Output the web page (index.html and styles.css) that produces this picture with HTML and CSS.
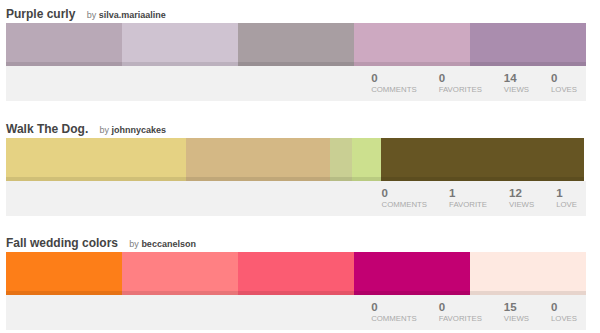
FILE: index.html
```html
<!DOCTYPE html>
<html lang="en">

<head>
    <meta charset="UTF-8">
    <meta name="viewport" content="width=device-width, initial-scale=1.0">
    <title>Palettes</title>
    <link rel="stylesheet" href="styles.css">
</head>

<body>
    <div class="palette">
        <h2 class="title">Purple curly <span class="by">by <b>silva.mariaaline</b></span></h2>
        <div class="bar">
            <div class="swatch" style="width:116px;background:#b9a9b7"></div>
            <div class="swatch" style="width:116px;background:#cfc3d1"></div>
            <div class="swatch" style="width:116px;background:#a89ea2"></div>
            <div class="swatch" style="width:116px;background:#cda9c1"></div>
            <div class="swatch" style="width:116px;background:#aa8dae"></div>
        </div>
        <div class="stats">
            <div class="stat"><span class="num">0</span><span class="label">Comments</span></div>
            <div class="stat"><span class="num">0</span><span class="label">Favorites</span></div>
            <div class="stat"><span class="num">14</span><span class="label">Views</span></div>
            <div class="stat"><span class="num">0</span><span class="label">Loves</span></div>
        </div>
    </div>

    <div class="palette">
        <h2 class="title">Walk The Dog. <span class="by">by <b>johnnycakes</b></span></h2>
        <div class="bar">
            <div class="swatch" style="width:180px;background:#e5d283"></div>
            <div class="swatch" style="width:144px;background:#d4b885"></div>
            <div class="swatch" style="width:22px;background:#c9cf93"></div>
            <div class="swatch" style="width:29px;background:#cce08e"></div>
            <div class="swatch" style="width:203px;background:#665523"></div>
        </div>
        <div class="stats">
            <div class="stat"><span class="num">0</span><span class="label">Comments</span></div>
            <div class="stat"><span class="num">1</span><span class="label">Favorite</span></div>
            <div class="stat"><span class="num">12</span><span class="label">Views</span></div>
            <div class="stat"><span class="num">1</span><span class="label">Love</span></div>
        </div>
    </div>

    <div class="palette">
        <h2 class="title">Fall wedding colors <span class="by">by <b>beccanelson</b></span></h2>
        <div class="bar">
            <div class="swatch" style="width:116px;background:#fd7e18"></div>
            <div class="swatch" style="width:116px;background:#ff8083"></div>
            <div class="swatch" style="width:116px;background:#fb5c72"></div>
            <div class="swatch" style="width:116px;background:#c20072"></div>
            <div class="swatch" style="width:116px;background:#fee9e1"></div>
        </div>
        <div class="stats">
            <div class="stat"><span class="num">0</span><span class="label">Comments</span></div>
            <div class="stat"><span class="num">0</span><span class="label">Favorites</span></div>
            <div class="stat"><span class="num">15</span><span class="label">Views</span></div>
            <div class="stat"><span class="num">0</span><span class="label">Loves</span></div>
        </div>
    </div>
</body>

</html>
```

FILE: styles.css
```css
body {
    font-family: 'Liberation Sans', Arial, sans-serif;
    background-color: #ffffff;
    margin: 0;
    padding: 6px 0 0 6px;
}

.palette {
    width: 580px;
    margin-bottom: 19.5px;
}

.palette:last-child {
    margin-bottom: 0;
}

.title {
    margin: 0;
    font-size: 12px;
    line-height: 16px;
    font-weight: bold;
    color: #444444;
}

.by {
    margin-left: 8px;
    font-size: 9px;
    font-weight: normal;
    color: #808080;
}

.by b {
    color: #444444;
}

.bar {
    display: flex;
    height: 43px;
}

.swatch {
    height: 43px;
    box-shadow: inset 0 -4px 0 rgba(0, 0, 0, 0.09);
}

.stats {
    display: flex;
    justify-content: flex-end;
    gap: 22px;
    height: 35px;
    box-sizing: border-box;
    padding: 6px 9px 0 0;
    background-color: #f1f1f1;
}

.stat {
    display: flex;
    flex-direction: column;
}

.num {
    font-size: 11.5px;
    line-height: 12px;
    font-weight: bold;
    color: #777777;
}

.label {
    margin-top: 1px;
    font-size: 7.8px;
    line-height: 10px;
    text-transform: uppercase;
    color: #aaaaaa;
}
```
